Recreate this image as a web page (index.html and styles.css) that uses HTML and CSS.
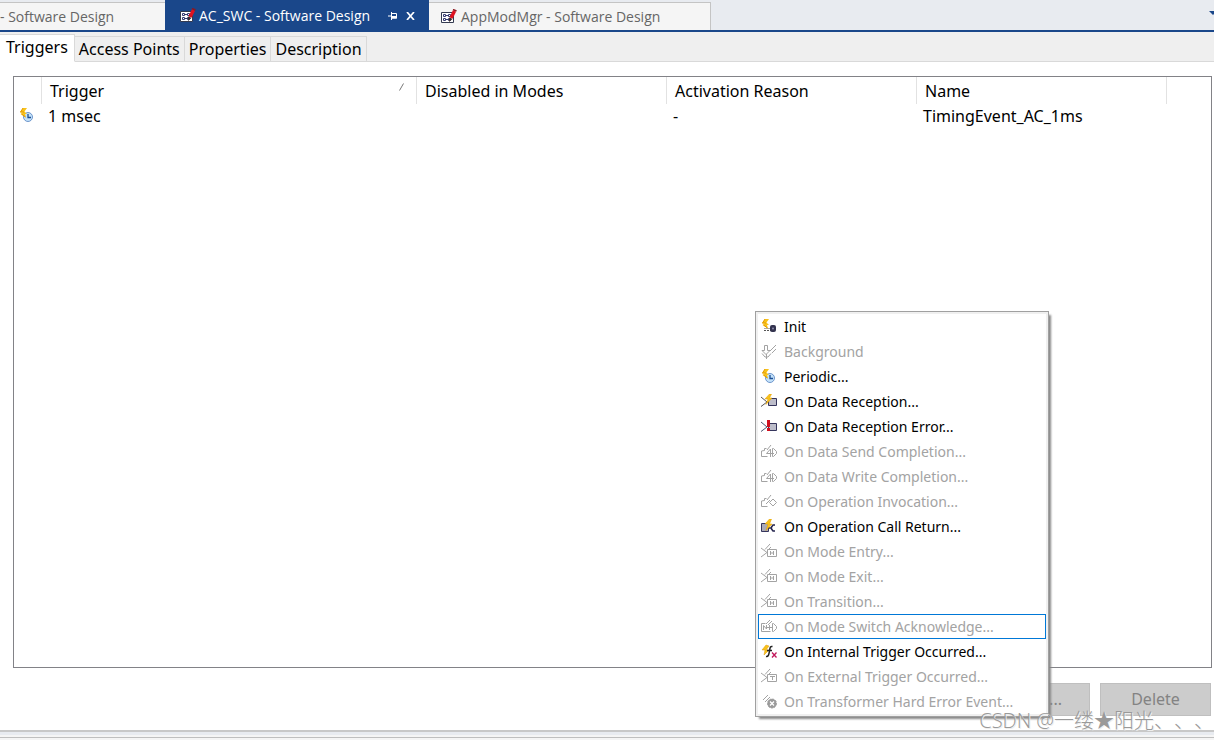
FILE: index.html
```html
<!DOCTYPE html>
<html lang="en">
<head>
<meta charset="utf-8">
<title>AC_SWC - Software Design</title>
<link rel="stylesheet" href="styles.css">
</head>
<body>
<svg class="defs" aria-hidden="true">
  <defs>
    <g id="bolt"><path d="M4 0L1 4.500h3L1.500 6l5.500 3.500L6 6h2L5.500 3.500 8 0z" fill="#f8c21a"/><path d="M4 0L1.500 4H5M2.500 6L6.500 9" fill="none" stroke="#e39a00"/></g>
    <g id="clock"><circle cx="9" cy="9" r="4.500" fill="#c4e2fa" stroke="#6f97cc"/><path d="M9 6v3.500h3" fill="none" stroke="#1d4f94" stroke-width="1.300"/></g>
    <g id="send" fill="none" stroke="#a3a3a3"><path d="M5.500 4.500H3.500V6.500L.5 7v5.500h6M6 6l4-5"/></g>
    <g id="dee" fill="none" stroke="#a3a3a3"><path d="M5.500 9.500L9.500 5v8M5.500 9.500h7.500M11.500 4.500v8h1l3-3v-2l-3-3z"/></g>
    <g id="mode" fill="none" stroke="#a3a3a3"><path d="M0 4l6 4.500L0 13M4 5.500L9 0M6 7l4-4M6.500 5.500h9v7h-9zM9.500 7v4M12.500 7v4M9.500 9h3"/></g>
    <g id="design"><path d="M.5 3.500h12v10H.5z" fill="#fff" stroke="#333a50"/><path d="M2.500 5.500h2v2h-2zM2.500 9.500h2v2h-2zM7.500 5.500h2v2h-2zM7.500 9.500h2v2h-2z" fill="none" stroke="#353b70"/><path d="M5 6.500h2M5 10.500h2" stroke="#353b70"/><path d="M13.500 2L10 9" stroke="#df1220" stroke-width="3.500"/><path d="M12 .5l3.500 1.500" stroke="#8c1820" stroke-width="1.500"/><path d="M8 8.500l3.500 1.500L8 13z" fill="#3a2a2c"/></g>
  </defs>
</svg>

<div class="app">
  <nav class="docs" aria-label="Documents">
    <button class="doc doc-first">- Software Design</button>
    <div class="doc doc-active">
      <svg class="icon" viewBox="0 0 16 16"><use href="#design"/></svg>
      <span class="doc-title">AC_SWC - Software Design</span>
      <button class="tool" aria-label="Pin"><svg viewBox="0 0 9 8"><path d="M0 4h3M3.500 0v8M3 1.500h5.500V6H3" fill="none" stroke="#fff"/><path d="M4 4h5v2.500H4z" fill="#fff"/></svg></button>
      <button class="tool" aria-label="Close"><svg viewBox="0 0 9 8"><path d="M1 0l7 8M8 0L1 8" stroke="#fff" stroke-width="1.700"/></svg></button>
    </div>
    <button class="doc doc-last">
      <svg class="icon" viewBox="0 0 16 16"><use href="#design"/></svg>
      <span>AppModMgr - Software Design</span>
    </button>
    <button class="more" aria-label="More documents"><svg viewBox="0 0 8 4"><path d="M0 0h8L4 4z" fill="#1a478a"/></svg></button>
  </nav>

  <nav class="tabs" aria-label="Sections">
    <button class="tab tab-on">Triggers</button>
    <button class="tab">Access Points</button>
    <button class="tab">Properties</button>
    <button class="tab">Description</button>
  </nav>

  <main class="page">
    <div class="list">
      <table>
        <colgroup><col class="c-icon"><col class="c-trigger"><col class="c-std"><col class="c-std"><col class="c-std"><col></colgroup>
        <thead>
          <tr><th></th><th><div class="sorted">Trigger <svg viewBox="0 0 5 8"><path d="M.5 7.500l4-7" stroke="#777" fill="none"/></svg></div></th><th>Disabled in Modes</th><th>Activation Reason</th><th>Name</th><th></th></tr>
        </thead>
        <tbody>
          <tr><td class="cell-icon"><svg class="icon" viewBox="0 0 16 16"><use href="#clock"/><use href="#bolt"/></svg></td><td>1 msec</td><td></td><td>-</td><td>TimingEvent_AC_1ms</td><td></td></tr>
        </tbody>
      </table>
    </div>
    <div class="actions">
      <button class="btn btn-config" disabled>Config...</button>
      <button class="btn" disabled>Delete</button>
    </div>
  </main>
  <footer class="foot"></footer>
</div>

<div class="menu" role="menu">
  <button class="item" role="menuitem"><svg class="icon" viewBox="0 0 16 16"><path d="M3 9.500h8" stroke="#aaa"/><path d="M3 11.500h8" stroke="#555" stroke-dasharray="2 1"/><rect x="9" y="6" width="6" height="7" rx="2" fill="#33334f"/><circle cx="12" cy="9.500" r="1" fill="#8d8dab"/><use href="#bolt"/></svg>Init</button>
  <button class="item" role="menuitem" disabled><svg class="icon" viewBox="0 0 16 16"><g fill="none" stroke="#a3a3a3"><path d="M3.500 1.500h3v5h2.500l-4 4-4-4h2.500zM1 9.500l3 3.500h3l3-3.500M5.500 10v5M9 7l6-6M11 9l4-4"/></g></svg>Background</button>
  <button class="item" role="menuitem"><svg class="icon" viewBox="0 0 16 16"><use href="#clock"/><use href="#bolt"/></svg>Periodic...</button>
  <button class="item" role="menuitem"><svg class="icon" viewBox="0 0 16 16"><path d="M0 3l6 5-6 4.500" fill="none" stroke="#555"/><path d="M7.500 4.500h8v7h-8z" fill="#bdbdca" stroke="#35355c"/><path d="M8.500 0L4 5h3l-2 5.500 6-6.500H8.500l2-4z" fill="#f8c21a" stroke="#e39a00" stroke-width=".5"/></svg>On Data Reception...</button>
  <button class="item" role="menuitem"><svg class="icon" viewBox="0 0 16 16"><path d="M0 3l6 5-6 4.500" fill="none" stroke="#4c5775"/><path d="M7.500 4.500h8v7h-8z" fill="#bdbdca" stroke="#35355c"/><path d="M6 1h3v7H6zM6 9h3v3H6z" fill="#cf1020"/></svg>On Data Reception Error...</button>
  <button class="item" role="menuitem" disabled><svg class="icon" viewBox="0 0 16 16"><use href="#send"/><use href="#dee"/></svg>On Data Send Completion...</button>
  <button class="item" role="menuitem" disabled><svg class="icon" viewBox="0 0 16 16"><use href="#send"/><use href="#dee"/></svg>On Data Write Completion...</button>
  <button class="item" role="menuitem" disabled><svg class="icon" viewBox="0 0 16 16"><use href="#send"/><path d="M5 10l4-4M12 5l3.500 3.500L12 12 8.500 8.500z" fill="none" stroke="#a3a3a3"/></svg>On Operation Invocation...</button>
  <button class="item" role="menuitem"><svg class="icon" viewBox="0 0 16 16"><path d="M.5 4.500h7v8h-7z" fill="#a9a9b8" stroke="#35355c"/><path d="M14 6h-2l-1.500 2v2l1.500 2h2M7 9h3" fill="none" stroke="#26264f" stroke-width="1.500"/><path d="M8.500 0L4 5h3l-2 6.500 6-6.500H8.500l2-5z" fill="#f8c21a" stroke="#e39a00" stroke-width=".5"/></svg>On Operation Call Return...</button>
  <button class="item" role="menuitem" disabled><svg class="icon" viewBox="0 0 16 16"><use href="#mode"/></svg>On Mode Entry...</button>
  <button class="item" role="menuitem" disabled><svg class="icon" viewBox="0 0 16 16"><use href="#mode"/></svg>On Mode Exit...</button>
  <button class="item" role="menuitem" disabled><svg class="icon" viewBox="0 0 16 16"><use href="#mode"/></svg>On Transition...</button>
  <button class="item item-focus" role="menuitem" disabled><svg class="icon" viewBox="0 0 16 16"><g fill="none" stroke="#a3a3a3"><path d="M4.500 4.500H.5v8h9M2.500 11V6.500l3 3.500V6M5 5l4-4M7 6l4-4M11.500 4.500v8h1l3-3v-2l-3-3zM8.500 6v5M6 8.500h5"/></g></svg>On Mode Switch Acknowledge...</button>
  <button class="item" role="menuitem"><svg class="icon" viewBox="0 0 16 16"><path d="M5 1L1 6h3L3 11l5-5H5l3-4z" fill="#f8c21a" stroke="#e39a00" stroke-width=".5"/><path d="M11.500 2.500C9 2 9 4 8.500 7S7.500 13 5 12.500M6 6.500h5" fill="none" stroke="#222" stroke-width="1.500"/><path d="M11 8.500l4.500 5M15.500 8.500l-4.500 5" stroke="#c2185b" stroke-width="1.300"/></svg>On Internal Trigger Occurred...</button>
  <button class="item" role="menuitem" disabled><svg class="icon" viewBox="0 0 16 16"><g fill="none" stroke="#a3a3a3"><path d="M0 4l6 4.500L0 13M4 5.500L9 0M6 7l4-4M6.500 5.500h9v7h-9zM9 7.500h5M11.500 7.500V11"/></g></svg>On External Trigger Occurred...</button>
  <button class="item" role="menuitem" disabled><svg class="icon" viewBox="0 0 16 16"><path d="M2 6l5-5M4 8l5-5" stroke="#a3a3a3"/><circle cx="11" cy="9.500" r="4.500" fill="#9a9a9a" stroke="#9a9a9a" stroke-dasharray="2 1"/><path d="M9 7.500l4 4M13 7.500l-4 4" stroke="#fff" stroke-width="1.300"/></svg>On Transformer Hard Error Event...</button>
</div>
<div class="mark" lang="zh-CN">CSDN @一缕★阳光、、、</div>
</body>
</html>
```
FILE: styles.css
```css
* { box-sizing: border-box; }
html, body { margin: 0; height: 100%; overflow: hidden; }
body { font: 16px/24px "Noto Sans", "Open Sans", sans-serif; color: #000; background: #fff; }
button { font: inherit; color: inherit; background: none; border: 0; margin: 0; padding: 0; text-align: left; white-space: nowrap; }
svg { display: block; flex: none; }
.defs { position: absolute; width: 0; height: 0; }
.icon { width: 16px; height: 16px; }

.app { display: flex; flex-direction: column; height: 100vh; }

.docs { display: flex; align-items: flex-end; height: 32px; flex: none; background: #e8ebf0; border-bottom: 2px solid #1a478a; font-family: "Open Sans", sans-serif; font-size: 14px; color: #666; }
.doc { display: flex; align-items: center; height: 28px; background: #f5f5f5; border-top: 1px solid #c4c4c4; }
.doc-first { width: 165px; }
.doc-active { width: 264px; height: 30px; background: #1a478a; border: 0; color: #fff; padding: 1px 0 0 15px; gap: 3px; }
.doc-title { margin-right: 12px; }
.doc-last { width: 282px; padding-left: 12px; gap: 4px; border-right: 1px solid #c4c4c4; }
.tool { padding: 4px 3px; }
.tool svg { width: 9px; height: 8px; }
.more { margin-left: auto; margin-right: -3px; padding-bottom: 4px; align-self: center; }
.more svg { width: 8px; height: 4px; }

.tabs { display: flex; align-items: flex-end; height: 30px; flex: none; background: #efefef; box-shadow: inset 0 -1px #d9d9d9; }
.tab { height: 26px; padding: 0 4px; border: 1px solid #d9d9d9; border-left: 0; }
.tab-on { height: 28px; padding: 0 6px 2px; background: #fff; border-bottom-color: #fff; }

.page { flex: 1; display: flex; flex-direction: column; min-height: 0; padding: 14px 3px 14px 13px; }
.list { flex: 1; min-height: 0; border: 1px solid #828287; margin-right: -1px; }
table { width: 100%; table-layout: fixed; border-collapse: separate; border-spacing: 0; }
.c-icon { width: 28px; }
.c-trigger { width: 375px; }
.c-std { width: 250px; }
th { height: 27px; padding: 2px 8px 1px; font-weight: 400; text-align: left; border-right: 1px solid #e2e2e2; }
th:last-child { border: 0; }
td { height: 24px; padding: 0 6px; }
.cell-icon { padding: 0 5px; }
.sorted { display: flex; justify-content: space-between; }
.sorted svg { width: 5px; height: 8px; margin: 4px 4px 0 0; }

.actions { display: flex; justify-content: flex-end; gap: 10px; padding-top: 15px; }
.btn { width: 111px; height: 33px; padding-bottom: 2px; border: 1px solid #bfbfbf; background: #ccc; color: #838383; text-align: center; }
.btn-config { text-align: right; padding-right: 27px; }
.foot { flex: none; height: 10px; background: #f5f5f5; border-top: 2px solid #c8c8c8; box-shadow: inset 0 3px #e8ebf0, inset 0 -2px #f5f5f5, inset 0 -3px #bfbfbf; }

.menu { position: absolute; left: 755px; top: 311px; width: 294px; padding: 2px; display: flex; flex-direction: column; background: #fff; border: 1px solid #a0a0a0; box-shadow: inset 0 0 0 2px #f0f0f0, 3px 3px 2px -1px #888; font-size: 14px; }
.item { display: flex; align-items: center; gap: 7px; height: 25px; padding: 0 3px; border: 0; }
.item:disabled { color: #a3a3a3; }
.item-focus { border: 1px solid #0078d7; padding: 0 2px; }
.mark { position: absolute; right: 0; bottom: 5px; font: 20px/28px "Open Sans", "Noto Sans CJK SC", sans-serif; font-weight: 300; text-spacing-trim: space-all; color: #999; text-shadow: 1px 1px #eee; white-space: nowrap; }
```
